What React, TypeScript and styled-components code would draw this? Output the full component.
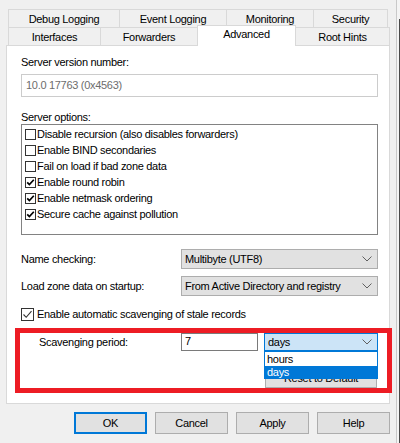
import React from "react";
import styled, { createGlobalStyle } from "styled-components";

const Global = createGlobalStyle`
  html, body { margin: 0; padding: 0; background: #f0f0f0; }
  body {
    font-family: "Liberation Sans", Arial, sans-serif;
    font-size: 11px;
    letter-spacing: -0.3px;
    color: #000;
  }
  * { box-sizing: border-box; }
`;

const Window = styled.div`
  position: relative;
  width: 400px;
  height: 443px;
  padding-top: 9px;
  background: #f0f0f0;
  overflow: hidden;
`;

const EdgeStrip = styled.div`
  position: absolute;
  left: 396px;
  top: 0;
  width: 4px;
  height: 443px;
  border-left: 1px solid #c9c9c9;
  background: #f4f4f4;
  &::after {
    content: "";
    position: absolute;
    left: 2px;
    top: 19px;
    bottom: 0;
    width: 1px;
    background: #4a4a4a;
  }
`;

const TabRow = styled.div`
  display: flex;
  margin-left: 8px;
  height: 18px;
`;

const Tab = styled.div<{ $w: number; $active?: boolean }>`
  position: relative;
  width: ${(p) => p.$w}px;
  height: ${(p) => (p.$active ? 21 : 18)}px;
  margin-top: ${(p) => (p.$active ? -2 : 0)}px;
  border: 1px solid #d9d9d9;
  border-bottom: none;
  background: ${(p) => (p.$active ? "#ffffff" : "#f0f0f0")};
  z-index: ${(p) => (p.$active ? 2 : 0)};
  text-align: center;
  line-height: ${(p) => (p.$active ? 17 : 18)}px;
  white-space: nowrap;
  & + & {
    margin-left: -1px;
  }
`;

const Panel = styled.div`
  position: relative;
  margin-left: 6px;
  width: 384px;
  height: 359px;
  background: #ffffff;
  border: 1px solid #d9d9d9;
  padding: 9px 11px 0 14px;
  display: flex;
  flex-direction: column;
`;

const Label = styled.div<{ $mt?: number }>`
  height: 14px;
  line-height: 14px;
  margin-top: ${(p) => p.$mt ?? 0}px;
  white-space: nowrap;
`;

const ReadOnlyBox = styled.div`
  margin-top: 5px;
  height: 23px;
  border: 1px solid #cccccc;
  background: #ffffff;
  color: #6d6d6d;
  padding-left: 4px;
  line-height: 21px;
`;

const ListBox = styled.div`
  height: 111px;
  border: 1px solid #828282;
  background: #ffffff;
  padding: 1px 0 0 3px;
  display: flex;
  flex-direction: column;
`;

const ListItem = styled.div`
  height: 16px;
  display: flex;
  align-items: center;
  white-space: nowrap;
`;

const SmallBox = styled.span`
  width: 11px;
  height: 11px;
  border: 1px solid #333333;
  background: #ffffff;
  margin-right: 1px;
  display: inline-flex;
  align-items: center;
  justify-content: center;
  flex: none;
`;

const BigBox = styled.span`
  width: 13px;
  height: 13px;
  border: 1px solid #333333;
  background: #ffffff;
  margin-right: 3px;
  display: inline-flex;
  align-items: center;
  justify-content: center;
  flex: none;
`;

const FieldRow = styled.div<{ $mt: number; $h: number }>`
  display: flex;
  align-items: center;
  margin-top: ${(p) => p.$mt}px;
  height: ${(p) => p.$h}px;
`;

const RowLabel = styled.div<{ $indent?: number }>`
  width: 160px;
  padding-left: ${(p) => p.$indent ?? 0}px;
  white-space: nowrap;
  flex: none;
`;

const Select = styled.div<{ $w: number; $focus?: boolean }>`
  position: relative;
  width: ${(p) => p.$w}px;
  height: 100%;
  background: ${(p) => (p.$focus ? "#cce4f7" : "#e1e1e1")};
  border: 1px solid ${(p) => (p.$focus ? "#0078d7" : "#adadad")};
  padding: 0 5px 0 3px;
  display: flex;
  align-items: center;
  justify-content: space-between;
  white-space: nowrap;
  flex: none;
`;

const TextBox = styled.div`
  width: 77px;
  height: 100%;
  border: 1px solid #7a7a7a;
  background: #ffffff;
  padding-left: 3px;
  line-height: 15px;
  margin-right: 6px;
  flex: none;
`;

const DropList = styled.div`
  position: absolute;
  left: -1px;
  top: 17px;
  width: 114px;
  height: 28px;
  border: 1px solid #0078d7;
  background: #ffffff;
  z-index: 3;
  display: flex;
  flex-direction: column;
`;

const DropItem = styled.div<{ $sel?: boolean }>`
  flex: ${(p) => (p.$sel ? "0 0 13px" : "1 1 auto")};
  line-height: ${(p) => (p.$sel ? 12 : 14)}px;
  padding-left: 2px;
  background: ${(p) => (p.$sel ? "#0078d7" : "#ffffff")};
  color: ${(p) => (p.$sel ? "#ffffff" : "#000000")};
`;

const ResetButton = styled.div`
  margin-top: 13px;
  margin-left: 244px;
  width: 112px;
  height: 24px;
  background: #e1e1e1;
  border: 1px solid #adadad;
  text-align: center;
  line-height: 27px;
  white-space: nowrap;
`;

const ButtonRow = styled.div`
  display: flex;
  justify-content: flex-end;
  gap: 8px;
  margin-top: 8px;
  padding-right: 10px;
`;

const Button = styled.div<{ $default?: boolean }>`
  width: 73px;
  height: 22px;
  background: #e1e1e1;
  border: ${(p) => (p.$default ? "2px solid #0078d7" : "1px solid #adadad")};
  display: flex;
  align-items: center;
  justify-content: center;
`;

const Highlight = styled.div`
  position: absolute;
  left: 15px;
  top: 328px;
  width: 377px;
  height: 65px;
  border: 5px solid #ed1c24;
  pointer-events: none;
  z-index: 5;
`;

const Chevron = () => (
  <svg width="10" height="6" viewBox="0 0 10 6" style={{ flex: "none" }}>
    <polyline points="0.5,0.5 5,5 9.5,0.5" fill="none" stroke="#606060" strokeWidth="1" />
  </svg>
);

const Check = ({ size }: { size: number }) => (
  <svg width={size} height={size} viewBox="0 0 9 9">
    <polyline points="1.2,4.3 3.4,6.6 7.8,1.8" fill="none" stroke="#000" strokeWidth="1.7" />
  </svg>
);

const ThinCheck = () => (
  <svg width="11" height="11" viewBox="0 0 11 11">
    <polyline points="1.5,5.5 4.2,8.3 9.5,2.2" fill="none" stroke="#333" strokeWidth="1.1" />
  </svg>
);

const options: { text: string; on: boolean }[] = [
  { text: "Disable recursion (also disables forwarders)", on: false },
  { text: "Enable BIND secondaries", on: false },
  { text: "Fail on load if bad zone data", on: false },
  { text: "Enable round robin", on: true },
  { text: "Enable netmask ordering", on: true },
  { text: "Secure cache against pollution", on: true },
];

export default function App() {
  return (
    <>
      <Global />
      <Window>
        <TabRow>
          <Tab $w={112}>Debug Logging</Tab>
          <Tab $w={108}>Event Logging</Tab>
          <Tab $w={88}>Monitoring</Tab>
          <Tab $w={75}>Security</Tab>
        </TabRow>
        <TabRow>
          <Tab $w={93}>Interfaces</Tab>
          <Tab $w={98}>Forwarders</Tab>
          <Tab $w={99} $active>
            Advanced
          </Tab>
          <Tab $w={95}>Root Hints</Tab>
        </TabRow>
        <Panel>
          <Label>Server version number:</Label>
          <ReadOnlyBox>10.0 17763 (0x4563)</ReadOnlyBox>
          <Label $mt={13}>Server options:</Label>
          <ListBox>
            {options.map((o) => (
              <ListItem key={o.text}>
                <SmallBox>{o.on && <Check size={9} />}</SmallBox>
                {o.text}
              </ListItem>
            ))}
          </ListBox>
          <FieldRow $mt={14} $h={20}>
            <RowLabel>Name checking:</RowLabel>
            <Select $w={197}>
              <span>Multibyte (UTF8)</span>
              <Chevron />
            </Select>
          </FieldRow>
          <FieldRow $mt={7} $h={20}>
            <RowLabel>Load zone data on startup:</RowLabel>
            <Select $w={197}>
              <span>From Active Directory and registry</span>
              <Chevron />
            </Select>
          </FieldRow>
          <FieldRow $mt={11} $h={14}>
            <BigBox>
              <ThinCheck />
            </BigBox>
            Enable automatic scavenging of stale records
          </FieldRow>
          <FieldRow $mt={12} $h={18}>
            <RowLabel $indent={18}>Scavenging period:</RowLabel>
            <TextBox>7</TextBox>
            <Select $w={114} $focus>
              <span>days</span>
              <Chevron />
              <DropList>
                <DropItem>hours</DropItem>
                <DropItem $sel>days</DropItem>
              </DropList>
            </Select>
          </FieldRow>
          <ResetButton>Reset to Default</ResetButton>
        </Panel>
        <ButtonRow>
          <Button $default>OK</Button>
          <Button>Cancel</Button>
          <Button>Apply</Button>
          <Button>Help</Button>
        </ButtonRow>
        <Highlight />
        <EdgeStrip />
      </Window>
    </>
  );
}
